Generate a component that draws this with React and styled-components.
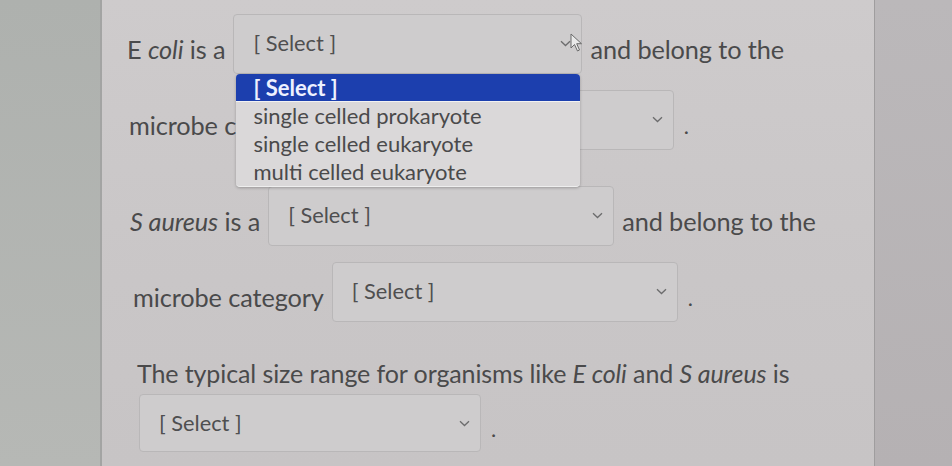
import React from "react";
import styled, { createGlobalStyle } from "styled-components";

const Global = createGlobalStyle`
  html, body { margin: 0; padding: 0; }
  body {
    width: 952px; height: 466px; overflow: hidden;
    background: #b5b7b4;
    font-family: Lato, "Noto Sans", sans-serif;
  }
`;

const Screen = styled.div`
  display: flex;
  width: 952px;
  height: 466px;
  background: linear-gradient(180deg, #aeb1ae 0%, #b6b8b5 100%);
`;

const Gutter = styled.div`
  width: 100px;
  flex: none;
`;

const Panel = styled.div`
  width: 775px;
  flex: none;
  box-sizing: border-box;
  border-left: 2px solid #a3a4a3;
  border-right: 1px solid #9f9d9e;
  background: linear-gradient(180deg, #cecbcc 0%, #c9c6c7 60%, #c7c4c5 100%);
  padding: 14px 0 0 ${(p) => p.$pad}px;
`;

const RightSide = styled.div`
  flex: 1;
  background: linear-gradient(180deg, #bbb8ba 0%, #b5b1b3 100%);
`;

const Paragraph = styled.div`
  display: flex;
  flex-direction: column;
  gap: ${(p) => p.$gap}px;
  margin-bottom: 36px;
`;

const Line = styled.div`
  display: flex;
  align-items: center;
  gap: 8px;
  height: ${(p) => p.$h || 60}px;
  padding-left: ${(p) => p.$indent || 0}px;
`;

const Label = styled.span`
  font-size: 25.3px;
  color: #4a4a4b;
  padding-top: 10px;
  white-space: nowrap;
  letter-spacing: -0.1px;
`;

const Plain = styled.span`
  font-size: 25px;
  color: #4a4a4b;
  white-space: nowrap;
  letter-spacing: -0.1px;
`;

const Dot = styled.span`
  font-size: 22px;
  color: #4a4a4b;
  padding-top: 10px;
  margin-left: 2px;
`;

const SelectBox = styled.div`
  position: relative;
  box-sizing: border-box;
  width: ${(p) => p.$w}px;
  height: ${(p) => p.$h || 60}px;
  flex: none;
  background: #cecccd;
  border: 1px solid #b9b7b8;
  border-radius: 4px;
  display: flex;
  align-items: flex-start;
  padding: 14px 0 0 19px;
  font-size: 21.8px;
  color: #4f4f50;
`;

const Chevron = styled.svg`
  position: absolute;
  right: 10px;
  top: 25px;
  width: 11px;
  height: 7px;
`;

const Cursor = styled.svg`
  position: absolute;
  right: -3px;
  top: 18px;
  width: 14px;
  height: 20px;
`;

const List = styled.div`
  position: absolute;
  left: 2px;
  top: 59px;
  width: 344px;
  z-index: 2;
  background: #dad8d9;
  border-radius: 4px;
  box-shadow: 0 1px 3px rgba(0, 0, 0, 0.25);
  border-bottom: 1px solid #eeeeee;
  overflow: hidden;
`;

const Option = styled.div`
  height: 28px;
  line-height: 27px;
  padding-left: 17px;
  font-size: 22px;
  color: ${(p) => (p.$active ? "#eef1ff" : "#4a4a4b")};
  background: ${(p) => (p.$active ? "#1c3fae" : "transparent")};
  font-weight: ${(p) => (p.$active ? 700 : 400)};
  border-bottom: ${(p) => (p.$active ? "1px solid #f2f2f2" : "none")};
  box-sizing: border-box;
  white-space: nowrap;
`;

const ChevronIcon = () => (
  <Chevron viewBox="0 0 11 7">
    <path d="M1 1.2 L5.5 5.5 L10 1.2" fill="none" stroke="#6c6c6d" strokeWidth="1.3" />
  </Chevron>
);

const Select = ({ w, h, open, cursor }) => (
  <SelectBox $w={w} $h={h}>
    [ Select ]
    <ChevronIcon />
    {cursor && (
      <Cursor viewBox="0 0 14 20">
        <path
          d="M1 1 L1 15 L4.5 11.5 L7.5 18 L9.5 17 L6.7 10.7 L11.5 10.7 Z"
          fill="#e9e9e9"
          stroke="#6a6a6a"
          strokeWidth="1"
          strokeLinejoin="round"
        />
      </Cursor>
    )}
    {open && (
      <List>
        <Option $active>[ Select ]</Option>
        <Option>single celled prokaryote</Option>
        <Option>single celled eukaryote</Option>
        <Option>multi celled eukaryote</Option>
      </List>
    )}
  </SelectBox>
);

export default function App() {
  return (
    <>
      <Global />
      <Screen>
        <Gutter />
        <Panel $pad={25}>
          <Paragraph $gap={16}>
            <Line>
              <Label>
                E <i>coli</i> is a
              </Label>
              <Select w={349} open cursor />
              <Label>and belong to the</Label>
            </Line>
            <Line $indent={2}>
              <Label>microbe category</Label>
              <Select w={346} />
              <Dot>.</Dot>
            </Line>
          </Paragraph>
          <Paragraph $gap={16}>
            <Line $indent={3}>
              <Label>
                <i>S aureus</i> is a
              </Label>
              <Select w={346} />
              <Label>and belong to the</Label>
            </Line>
            <Line $indent={6}>
              <Label>microbe category</Label>
              <Select w={346} />
              <Dot>.</Dot>
            </Line>
          </Paragraph>
          <Paragraph $gap={6}>
            <Line $h={30} $indent={10}>
              <Plain>
                The typical size range for organisms like <i>E coli</i> and{" "}
                <i>S aureus</i> is
              </Plain>
            </Line>
            <Line $h={58} $indent={12}>
              <Select w={342} h={58} />
              <Dot>.</Dot>
            </Line>
          </Paragraph>
        </Panel>
        <RightSide />
      </Screen>
    </>
  );
}
